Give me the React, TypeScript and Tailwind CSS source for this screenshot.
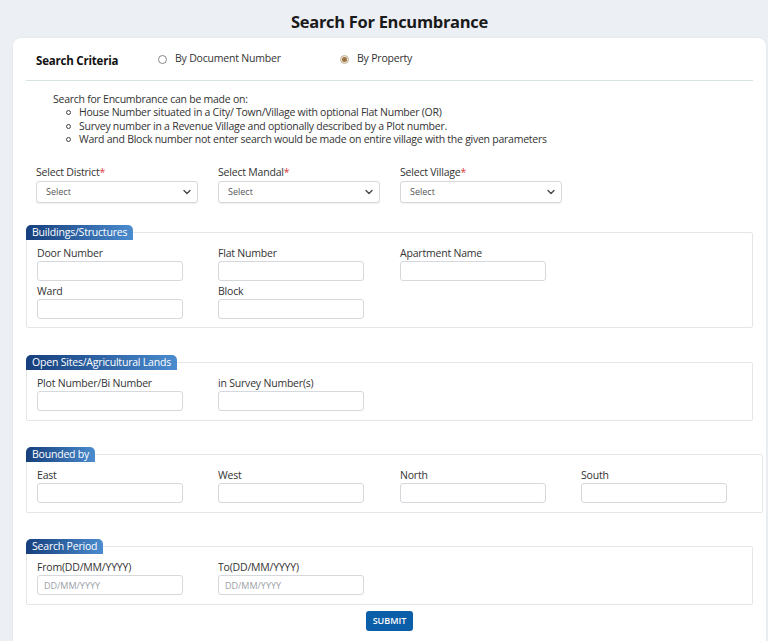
import React from 'react'

const FONT = "font-['Open_Sans','Noto_Sans',sans-serif]"

function Legend({ children }: { children: React.ReactNode }) {
  return (
    <legend className="-ml-[1px] h-[15px] rounded-t-[5px] bg-gradient-to-r from-[#173f7d] to-[#4a8ccf] px-[6px] text-[10.5px] leading-[15px] text-white tracking-[-0.2px]">
      {children}
    </legend>
  )
}

function Field({ label, placeholder }: { label: string; placeholder?: string }) {
  return (
    <div className="flex flex-col">
      <label className="h-[14px] text-[10.5px] leading-[14px] text-[#333] tracking-[-0.2px]">{label}</label>
      <input
        type="text"
        placeholder={placeholder}
        className="mt-[1px] h-[20px] w-[146px] rounded-[3px] border border-[#d5d8dc] bg-white px-[6px] text-[9px] outline-none placeholder:text-[#9aa0a6]"
      />
    </div>
  )
}

function Section({ title, children, top, bottom = 'pb-[9px]' }: { title: string; children: React.ReactNode; top: string; bottom?: string }) {
  return (
    <fieldset className={`${top} ${bottom} rounded-[2px] border border-[#e4e6e8]`}>
      <Legend>{title}</Legend>
      <div className="pl-[10px]">{children}</div>
    </fieldset>
  )
}

function Select({ label }: { label: string }) {
  return (
    <div className="flex flex-col">
      <span className="h-[14px] text-[10.5px] leading-[14px] text-[#333] tracking-[-0.2px]">
        {label}
        <span className="text-[#e03b3b]">*</span>
      </span>
      <div className="mt-[2px] flex h-[22px] w-[162px] items-center justify-between rounded-[3px] border border-[#d5d8dc] bg-white pl-[9px] pr-[6px] shadow-[0_1px_1px_rgba(0,0,0,0.06)]">
        <span className="text-[9px] text-[#555]">Select</span>
        <svg width="8" height="6" viewBox="0 0 8 6" fill="none">
          <path d="M1 1.5L4 4.5L7 1.5" stroke="#444" strokeWidth="1.3" strokeLinecap="round" strokeLinejoin="round" />
        </svg>
      </div>
    </div>
  )
}

export default function App() {
  const bullets = [
    'House Number situated in a City/ Town/Village with optional Flat Number (OR)',
    'Survey number in a Revenue Village and optionally described by a Plot number.',
    'Ward and Block number not enter search would be made on entire village with the given parameters',
  ]

  return (
    <div className={`${FONT} min-h-[641px] bg-[#eceff4] text-[#222]`}>
      <h1 className="flex h-[38px] items-center justify-center pl-[11px] pt-[6px] text-[16.5px] font-bold text-[#1a1a1a] tracking-[-0.3px]">
        Search For Encumbrance
      </h1>

      <div className="ml-[13px] mr-[2px] rounded-t-[8px] bg-white px-[13px] pb-[10px] shadow-[0_0_2px_rgba(0,0,0,0.08)]">
        {/* Criteria */}
        <div className="flex h-[43px] items-center border-b border-[#d6e3e2] pl-[10px]">
          <span className="mt-[4px] w-[122px] text-[11.5px] font-bold text-[#111] tracking-[-0.2px]">Search Criteria</span>
          <label className="flex w-[182px] items-center gap-[8px] text-[10.5px] text-[#333] tracking-[-0.2px]">
            <span className="h-[9px] w-[9px] rounded-full border border-[#888]" />
            By Document Number
          </label>
          <label className="flex items-center gap-[8px] text-[10.5px] text-[#333] tracking-[-0.2px]">
            <span className="flex h-[9px] w-[9px] items-center justify-center rounded-full border border-[#c8b79a] bg-[#eee6d8]">
              <span className="h-[5px] w-[5px] rounded-full bg-[#9a7443]" />
            </span>
            By Property
          </label>
        </div>

        {/* Intro */}
        <div className="pl-[27px] pt-[12px] text-[10.5px] leading-[13.3px] text-[#333] tracking-[-0.25px]">
          <p>Search for Encumbrance can be made on:</p>
          <ul className="pl-[13px]">
            {bullets.map(b => (
              <li key={b} className="flex items-center gap-[8px]">
                <span className="h-[5px] w-[5px] shrink-0 rounded-full border border-[#444]" />
                {b}
              </li>
            ))}
          </ul>
        </div>

        {/* Selects */}
        <div className="mt-[19px] grid grid-cols-[182px_182px_182px] pl-[10px]">
          <Select label="Select District" />
          <Select label="Select Mandal" />
          <Select label="Select Village" />
        </div>

        <Section title="Buildings/Structures" top="mt-[22px]" bottom="pb-[8px]">
          <div className="grid grid-cols-[181px_182px_181px] gap-y-[3px] pt-[6px]">
            <Field label="Door Number" />
            <Field label="Flat Number" />
            <Field label="Apartment Name" />
            <Field label="Ward" />
            <Field label="Block" />
          </div>
        </Section>

        <Section title="Open Sites/Agricultural Lands" top="mt-[27px]">
          <div className="grid grid-cols-[181px_182px] pt-[6px]">
            <Field label="Plot Number/Bi Number" />
            <Field label="in Survey Number(s)" />
          </div>
        </Section>

        <Section title="Bounded by" top="mt-[26px]">
          <div className="grid grid-cols-[181px_182px_181px_181px] pt-[6px]">
            <Field label="East" />
            <Field label="West" />
            <Field label="North" />
            <Field label="South" />
          </div>
        </Section>

        <Section title="Search Period" top="mt-[26px]">
          <div className="grid grid-cols-[181px_182px] pt-[6px]">
            <Field label="From(DD/MM/YYYY)" placeholder="DD/MM/YYYY" />
            <Field label="To(DD/MM/YYYY)" placeholder="DD/MM/YYYY" />
          </div>
        </Section>

        <div className="flex justify-center pt-[6px]">
          <button className="h-[20px] rounded-[3px] bg-[#0b5ea8] px-[7px] text-[9px] font-semibold text-white">SUBMIT</button>
        </div>
      </div>
    </div>
  )
}
